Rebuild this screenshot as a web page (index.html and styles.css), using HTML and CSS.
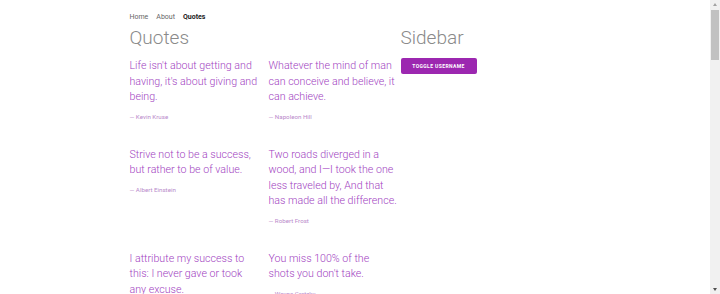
FILE: index.html
```html
<!DOCTYPE html>
<html lang="en">
<head>
    <meta charset="UTF-8">
    <meta name="viewport" content="width=device-width, initial-scale=1.0">
    <title>Quotes</title>
    <link rel="stylesheet" href="styles.css">
</head>
<body>
    <div class="container">
        <nav class="crumbs">
            <a href="#">Home</a>
            <a href="#">About</a>
            <a href="#" class="current">Quotes</a>
        </nav>

        <div class="layout">
            <main>
                <h1>Quotes</h1>
                <div class="quotes">
                    <div class="quote">
                        <p>Life isn't about getting and having, it's about giving and being.</p>
                        <span class="author">&mdash; Kevin Kruse</span>
                    </div>
                    <div class="quote">
                        <p>Whatever the mind of man can conceive and believe, it can achieve.</p>
                        <span class="author">&mdash; Napoleon Hill</span>
                    </div>
                    <div class="quote">
                        <p>Strive not to be a success, but rather to be of value.</p>
                        <span class="author">&mdash; Albert Einstein</span>
                    </div>
                    <div class="quote">
                        <p>Two roads diverged in a wood, and I&mdash;I took the one less traveled by, And that has made all the difference.</p>
                        <span class="author">&mdash; Robert Frost</span>
                    </div>
                    <div class="quote">
                        <p>I attribute my success to this: I never gave or took any excuse.</p>
                        <span class="author">&mdash; Florence Nightingale</span>
                    </div>
                    <div class="quote">
                        <p>You miss 100% of the shots you don't take.</p>
                        <span class="author">&mdash; Wayne Gretzky</span>
                    </div>
                    <div class="quote">
                        <p>I've missed more than 9000 shots in my career. I've lost almost 300 games. 26 times I've been trusted to take the game winning shot and missed. I've failed over and over and over again in my life. And that is why I succeed.</p>
                        <span class="author">&mdash; Michael Jordan</span>
                    </div>
                    <div class="quote">
                        <p>The most difficult thing is the decision to act, the rest is merely tenacity.</p>
                        <span class="author">&mdash; Amelia Earhart</span>
                    </div>
                    <div class="quote">
                        <p>Every strike brings me closer to the next home run.</p>
                        <span class="author">&mdash; Babe Ruth</span>
                    </div>
                    <div class="quote">
                        <p>Definiteness of purpose is the starting point of all achievement.</p>
                        <span class="author">&mdash; W. Clement Stone</span>
                    </div>
                    <div class="quote">
                        <p>Life is what happens to you while you're busy making other plans.</p>
                        <span class="author">&mdash; John Lennon</span>
                    </div>
                    <div class="quote">
                        <p>We become what we think about.</p>
                        <span class="author">&mdash; Earl Nightingale</span>
                    </div>
                    <div class="quote">
                        <p>Life is 10% what happens to me and 90% of how I react to it.</p>
                        <span class="author">&mdash; Charles Swindoll</span>
                    </div>
                    <div class="quote">
                        <p>The most common way people give up their power is by thinking they don't have any.</p>
                        <span class="author">&mdash; Alice Walker</span>
                    </div>
                    <div class="quote">
                        <p>The mind is everything. What you think you become.</p>
                        <span class="author">&mdash; Buddha</span>
                    </div>
                    <div class="quote">
                        <p>The best time to plant a tree was 20 years ago. The second best time is now.</p>
                        <span class="author">&mdash; Chinese Proverb</span>
                    </div>
                </div>
            </main>

            <aside>
                <h1>Sidebar</h1>
                <button type="button" onclick="toggleUsername()">Toggle Username</button>
            </aside>
        </div>
    </div>

    <div class="scrollbar" aria-hidden="true">
        <span class="arrow up"></span>
        <span class="thumb"></span>
        <span class="arrow down"></span>
    </div>

    <script>
        function toggleUsername() {
            document.body.classList.toggle("show-user");
        }
    </script>
</body>
</html>
```

FILE: styles.css
```css
body { margin: 0 10px 0 0; background: #fff; font-family: Roboto, "Liberation Sans", sans-serif; }
.container { max-width: 451px; margin: 0 auto; padding-top: 13px; }
.crumbs { display: flex; gap: 8px; font-size: 7px; line-height: 9px; }
.crumbs a { color: #666; text-decoration: none; }
.crumbs a.current { color: #222; font-weight: 700; }
.layout { display: grid; grid-template-columns: 271px 1fr; }
main { padding-right: 3px; }
h1 { margin: 4px 0 8px; font-size: 19px; font-weight: 300; line-height: 24px; color: #8a8a8a; }
.quotes { display: grid; grid-template-columns: 1fr 1fr; column-gap: 10px; margin-top: 2px; }
.quote { padding-bottom: 26px; }
.quote p { margin: 0 0 8px; font-size: 10.65px; font-weight: 300; line-height: 15.5px; color: #a23fbf; }
.author { display: block; font-size: 6.2px; line-height: 8px; color: #b98acb; }
aside button { display: block; width: 76px; height: 16px; padding: 0; border: 0; border-radius: 2px; background: #9c27b0; color: #fff; font-family: Roboto, sans-serif; font-size: 5px; font-weight: 700; letter-spacing: 0.4px; text-transform: uppercase; }

.scrollbar { position: fixed; top: 0; right: 0; bottom: 0; width: 10px; background: #f1f1f1; display: flex; flex-direction: column; align-items: center; }
.scrollbar .thumb { width: 8px; height: 50px; margin: 1px 0 auto; background: #c1c1c1; }
.scrollbar .arrow { width: 0; height: 0; margin: 3px 0; border-left: 2.5px solid transparent; border-right: 2.5px solid transparent; }
.scrollbar .up { border-bottom: 3px solid #a3a3a3; }
.scrollbar .down { border-top: 3px solid #505050; }
```
